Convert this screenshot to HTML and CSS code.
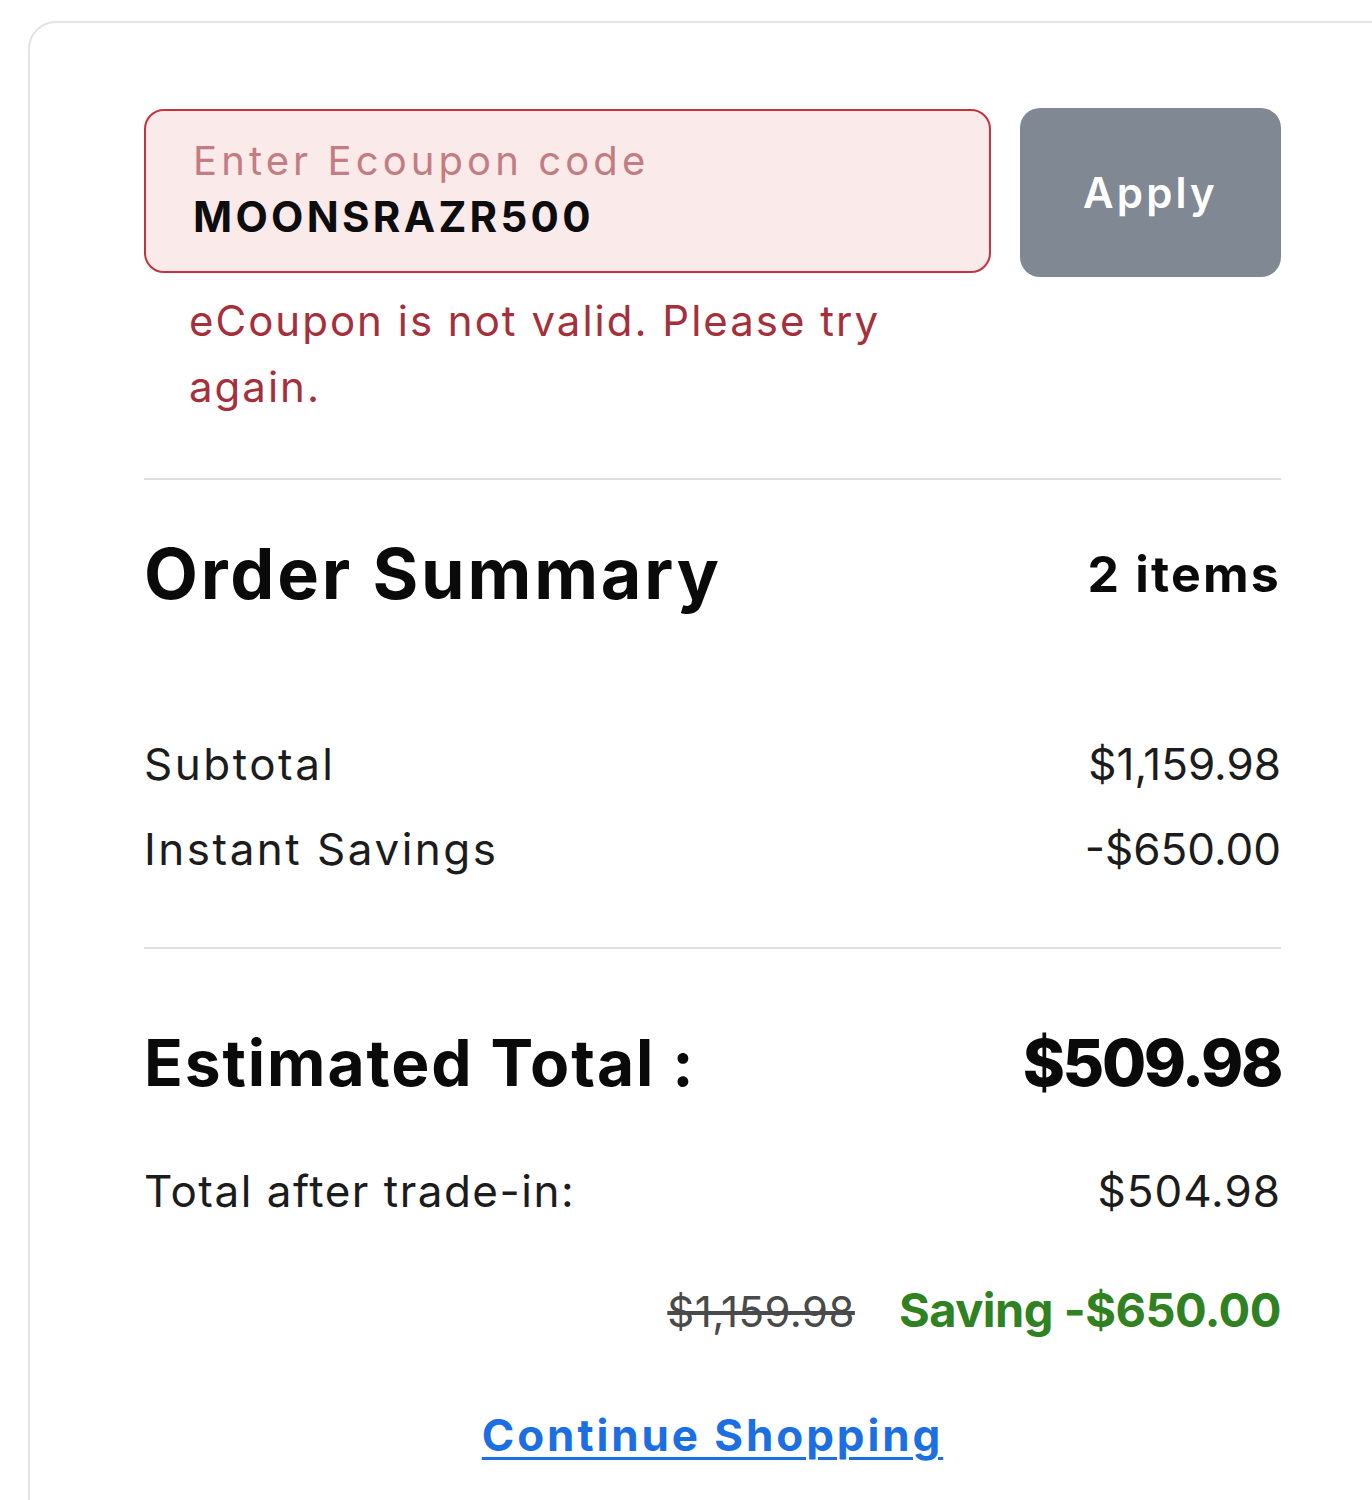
FILE: index.html
```html
<!DOCTYPE html>
<html lang="en">
<head>
<meta charset="utf-8">
<title>Order Summary</title>
<link rel="stylesheet" href="styles.css">
</head>
<body>
<div class="card">
  <div class="content">
    <div class="coupon-row">
      <label class="coupon-field">
        <span class="coupon-label">Enter Ecoupon code</span>
        <span class="coupon-value">MOONSRAZR500</span>
      </label>
      <button class="apply-btn" type="button">Apply</button>
    </div>
    <p class="coupon-error">eCoupon is not valid. Please try again.</p>

    <hr class="divider divider-top">

    <div class="summary-head">
      <h2 class="summary-title">Order Summary</h2>
      <span class="summary-count">2 items</span>
    </div>

    <div class="lines">
      <div class="line"><span class="line-label">Subtotal</span><span class="line-value">$1,159.98</span></div>
      <div class="line"><span class="line-label">Instant Savings</span><span class="line-value">-$650.00</span></div>
    </div>

    <hr class="divider divider-mid">

    <div class="total-row">
      <span class="total-label">Estimated Total :</span>
      <span class="total-value">$509.98</span>
    </div>

    <div class="line trade-row"><span class="line-label trade-label">Total after trade-in:</span><span class="line-value trade-value">$504.98</span></div>

    <div class="saving-row">
      <span class="was">$1,159.98</span>
      <span class="saving">Saving -$650.00</span>
    </div>

    <div class="continue-row">
      <a class="continue-link" href="#">Continue Shopping</a>
    </div>
  </div>
</div>
</body>
</html>
```

FILE: styles.css
```css
* {
  box-sizing: border-box;
}

html, body {
  margin: 0;
  padding: 0;
  background: #ffffff;
  overflow: hidden;
}

body {
  font-family: "Inter", "Noto Sans", sans-serif;
  color: #161616;
}

.card {
  margin: 21px 0 0 28px;
  width: 1420px;
  min-height: 1560px;
  border: 2px solid #e1e3e8;
  border-radius: 28px;
  padding: 86px 0 0 114px;
}

.content {
  width: 1137px;
}

.coupon-row {
  display: flex;
  align-items: flex-start;
  gap: 29px;
}

.coupon-field {
  flex: 0 0 847px;
  height: 164px;
  border: 2px solid #c3343e;
  border-radius: 20px;
  background: #fbeaea;
  padding: 26px 0 0 47px;
  display: flex;
  flex-direction: column;
}

.coupon-label {
  font-size: 40px;
  line-height: 48px;
  color: #c27d83;
  letter-spacing: 4.1px;
}

.coupon-value {
  font-size: 42px;
  line-height: 64px;
  font-weight: 700;
  color: #0d0d0d;
  letter-spacing: 3.3px;
}

.apply-btn {
  flex: 0 0 261px;
  height: 169px;
  margin-top: -1px;
  border: none;
  border-radius: 20px;
  background: #7f8893;
  color: #ffffff;
  font-family: inherit;
  font-size: 42px;
  font-weight: 600;
  letter-spacing: 3.2px;
}

.coupon-error {
  margin: 11px 0 0 45px;
  width: 760px;
  font-size: 42px;
  line-height: 66px;
  color: #a5303b;
  letter-spacing: 2px;
}

.divider {
  border: none;
  height: 2px;
  background: #dedfe2;
  margin: 0;
}

.divider-top {
  margin-top: 58px;
}

.summary-head {
  margin-top: 52px;
  display: flex;
  justify-content: space-between;
  align-items: center;
}

.summary-title {
  margin: 0;
  font-size: 70px;
  line-height: 84px;
  font-weight: 700;
  color: #0a0a0a;
  letter-spacing: 2.8px;
}

.summary-count {
  font-size: 50px;
  font-weight: 700;
  color: #0a0a0a;
  letter-spacing: 2.2px;
}

.lines {
  margin-top: 106px;
}

.line {
  display: flex;
  justify-content: space-between;
  font-size: 44px;
  line-height: 85px;
  color: #1c1c1c;
}

.line-label {
  letter-spacing: 2.5px;
}

.line-value {
  letter-spacing: 0;
}

.divider-mid {
  margin-top: 55px;
}

.total-row {
  margin-top: 74px;
  display: flex;
  justify-content: space-between;
  font-size: 64px;
  line-height: 80px;
  font-weight: 700;
  color: #0a0a0a;
}

.total-label {
  letter-spacing: 1.9px;
}

.total-value {
  font-weight: 800;
  letter-spacing: -2.4px;
}

.trade-row {
  margin-top: 46px;
}

.trade-label {
  letter-spacing: 1.5px;
}

.trade-value {
  letter-spacing: 1px;
}

.saving-row {
  margin-top: 41px;
  display: flex;
  justify-content: flex-end;
  align-items: baseline;
  gap: 44px;
  line-height: 70px;
}

.was {
  font-size: 42px;
  color: #4a4a4a;
  text-decoration: line-through;
  letter-spacing: 0.4px;
}

.saving {
  font-size: 47px;
  font-weight: 700;
  color: #2f8121;
  letter-spacing: -0.5px;
}

.continue-row {
  margin-top: 53px;
  text-align: center;
  line-height: 70px;
}

.continue-link {
  font-size: 44px;
  font-weight: 700;
  color: #1b6fe2;
  text-decoration: underline;
  text-decoration-thickness: 3px;
  text-underline-offset: 6px;
  letter-spacing: 2.9px;
}
```
